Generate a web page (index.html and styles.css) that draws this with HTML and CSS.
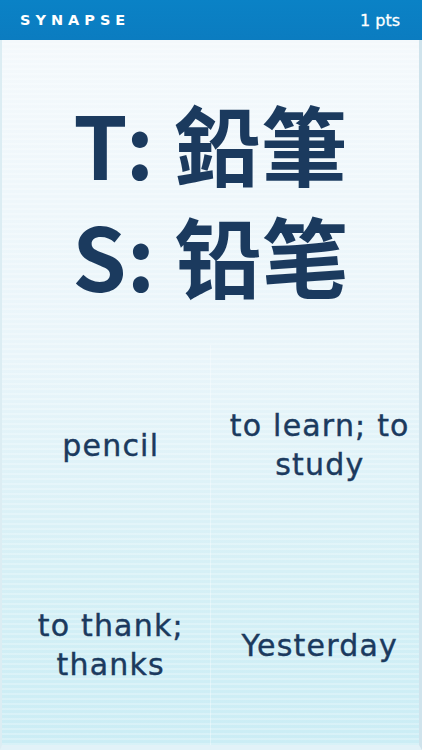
FILE: index.html
```html
<!DOCTYPE html>
<html lang="en">
<head>
<meta charset="utf-8">
<link rel="stylesheet" href="styles.css">
</head>
<body>
<div class="app">
  <header class="topbar">
    <span class="brand">SYNAPSE</span>
    <span class="points">1 pts</span>
  </header>
  <main class="card">
    <section class="prompt">
      <p class="term">T: 鉛筆<br>S: 铅笔</p>
    </section>
    <section class="answers">
      <div class="answer">pencil</div>
      <div class="answer">to learn; to study</div>
      <div class="answer">to thank; thanks</div>
      <div class="answer">Yesterday</div>
    </section>
  </main>
</div>
</body>
</html>
```
FILE: styles.css
```css
html, body {
  margin: 0;
  padding: 0;
}
body {
  width: 422px;
  height: 750px;
  overflow: hidden;
  background: #e4f4f9;
}
.app {
  display: flex;
  flex-direction: column;
  height: 750px;
}
.topbar {
  height: 40px;
  background: linear-gradient(#0a82c6, #0b7cc0);
  display: flex;
  align-items: center;
  justify-content: space-between;
  padding: 0 22px 0 20px;
  color: #ffffff;
  font-family: "DejaVu Sans", sans-serif;
}
.brand {
  font-size: 14.5px;
  font-weight: 700;
  letter-spacing: 5px;
}
.points {
  font-size: 16px;
  -webkit-text-stroke: 0.3px #ffffff;
}
.card {
  flex: 1;
  display: flex;
  flex-direction: column;
  background:
    repeating-linear-gradient(180deg, rgba(255,255,255,0) 0, rgba(255,255,255,0) 3px, rgba(255,255,255,0.25) 3px, rgba(255,255,255,0.25) 5px),
    linear-gradient(180deg, #f4f9fc 0%, #e9f5fa 45%, #d6f0f6 75%, #cbedf5 100%);
  border-left: 2px solid #dcedf3;
  border-right: 3px solid #cfe3ec;
  border-bottom: 5px solid #e2f2f8;
  color: #1b3a5e;
}
.prompt {
  height: 305px;
  display: flex;
  align-items: center;
  justify-content: center;
  padding-top: 10px;
  box-sizing: border-box;
}
.term {
  margin: 0;
  text-align: center;
  font-family: "Noto Sans CJK SC", sans-serif;
  font-weight: 700;
  font-size: 87px;
  line-height: 112px;
}
.answers {
  flex: 1;
  display: grid;
  grid-template-columns: 1fr 1fr;
  grid-template-rows: 1fr 1fr;
}
.answer {
  display: flex;
  align-items: center;
  justify-content: center;
  text-align: center;
  padding: 0 0 0 10px;
  font-family: "DejaVu Sans", sans-serif;
  font-size: 30px;
  letter-spacing: 1.2px;
  line-height: 39px;
  -webkit-text-stroke: 0.4px #1b3a5e;
}
.answer:nth-child(odd) {
  border-right: 1px solid rgba(255,255,255,0.35);
}
```
